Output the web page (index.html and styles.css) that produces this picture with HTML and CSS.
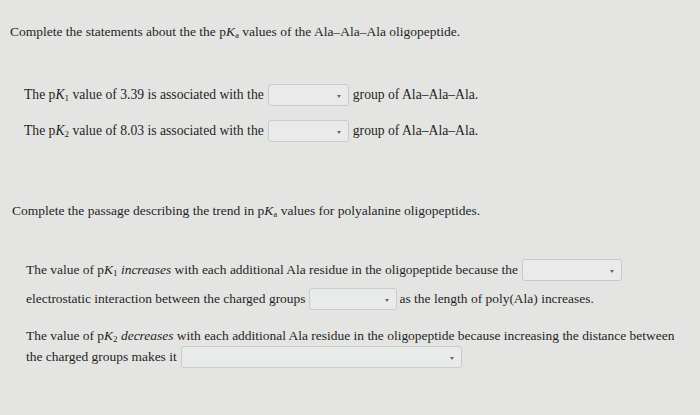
FILE: index.html
```html
<!DOCTYPE html>
<html>
<head>
<meta charset="utf-8">
<link rel="stylesheet" href="styles.css">
</head>
<body>
<div class="page">
  <p class="heading h1">Complete the statements about the the p<i>K</i><sub>a</sub> values of the Ala–Ala–Ala oligopeptide.</p>

  <div class="stmts">
    <div class="row">
      <span class="lbl">The p<i>K</i><sub>1</sub> value of 3.39 is associated with the</span>
      <span class="sel s1"><span class="arr"></span></span>
      <span>group of Ala–Ala–Ala.</span>
    </div>
    <div class="row">
      <span class="lbl">The p<i>K</i><sub>2</sub> value of 8.03 is associated with the</span>
      <span class="sel s1"><span class="arr"></span></span>
      <span>group of Ala–Ala–Ala.</span>
    </div>
  </div>

  <p class="heading h2">Complete the passage describing the trend in p<i>K</i><sub>a</sub> values for polyalanine oligopeptides.</p>

  <div class="passage">
    <div class="row r1">
      <span>The value of p<i>K</i><sub>1</sub> <i>increases</i> with each additional Ala residue in the oligopeptide because the</span>
      <span class="sel s2"><span class="arr"></span></span>
    </div>
    <div class="row r2">
      <span>electrostatic interaction between the charged groups</span>
      <span class="sel s3"><span class="arr"></span></span>
      <span>as the length of poly(Ala) increases.</span>
    </div>
    <div class="para2">
      <div class="line">The value of p<i>K</i><sub>2</sub> <i>decreases</i> with each additional Ala residue in the oligopeptide because increasing the distance between</div>
      <div class="row r3">
        <span>the charged groups makes it</span>
        <span class="sel s4"><span class="arr"></span></span>
      </div>
    </div>
  </div>
</div>
</body>
</html>
```

FILE: styles.css
```css
html, body {
  margin: 0;
  padding: 0;
}
body {
  background: #e4e5e3;
  width: 700px;
  height: 415px;
  overflow: hidden;
  font-family: "Liberation Serif", "Times New Roman", serif;
  font-size: 13.5px;
  color: #1f1f1f;
}
p { margin: 0; }
sub {
  font-size: 9px;
  vertical-align: -2px;
  line-height: 0;
}
.heading {
  line-height: 18px;
  white-space: nowrap;
}
.h1 {
  padding: 23px 0 0 10px;
}
.stmts {
  display: flex;
  flex-direction: column;
  gap: 14px;
  padding: 43px 0 0 24px;
  font-size: 13.65px;
}
.row {
  display: flex;
  align-items: center;
  gap: 4px;
  line-height: 18px;
  white-space: nowrap;
}
.sel {
  display: inline-block;
  position: relative;
  height: 20px;
  border: 1px solid #c9cbca;
  border-radius: 3px;
  background: #e9eaea;
  box-sizing: content-box;
}
.s1 { width: 79px; }
.s2 { width: 98px; }
.s3 { width: 86px; }
.s4 { width: 279px; }
.arr {
  position: absolute;
  right: 7px;
  top: 10px;
  width: 0;
  height: 0;
  border-left: 2px solid transparent;
  border-right: 2px solid transparent;
  border-top: 3px solid #666;
}
.h2 {
  padding: 60px 0 0 12px;
}
.passage {
  padding: 39px 0 0 26px;
  font-size: 13.46px;
}
.passage .row { gap: 3px; }
.passage .r1 { gap: 4px; }
.r2 { margin-top: 7px; }
.para2 {
  margin-top: 17px;
  line-height: 18px;
}
.line { white-space: nowrap; }
.r3 { margin-top: 1px; }
.r3 .sel { margin-left: 1px; }
```
